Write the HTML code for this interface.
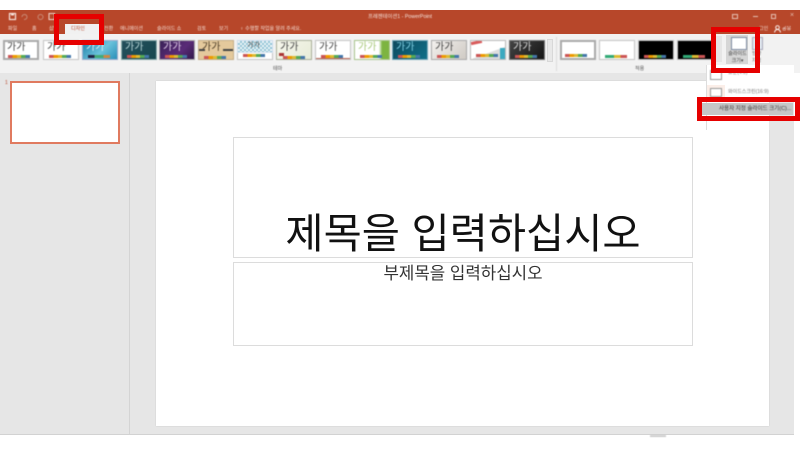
<!DOCTYPE html>
<html lang="ko"><head><meta charset="utf-8"><title>프레젠테이션1 - PowerPoint</title>
<style>
html,body{margin:0;padding:0;width:800px;height:450px;overflow:hidden;background:#fff}
body{position:relative;font-family:"Liberation Sans","Noto Sans CJK KR",sans-serif}
div,span{position:absolute;box-sizing:border-box;white-space:nowrap}
.s{filter:blur(.45px)}
.t{color:#f3d9cf;font-size:5px;line-height:8px;top:25px}
.th{top:40px;width:36px;height:20px;border:1px solid #c4c4c4;overflow:hidden;filter:blur(.5px)}
.th b{position:absolute;left:3px;top:0;font-weight:400;font-size:10px;line-height:13px;color:#444}
.th i{position:absolute;left:5px;top:14px;width:22px;height:2.500px;background:linear-gradient(90deg,#c55 0 20%,#e90 20% 40%,#db3 40% 60%,#5a5 60% 80%,#47a 80%)}
.l{color:#555;font-size:5px;line-height:7px}
.r{position:absolute;border:5px solid #e60000}
</style></head><body>
<!-- title bar -->
<div style="left:0;top:10px;width:800px;height:24px;background:#b7472a"></div>
<svg class="s" style="position:absolute;left:8px;top:12px" width="50" height="9" viewBox="0 0 50 9"><rect x="1.500" y="1.500" width="6" height="6" fill="none" stroke="#f6e3dc" stroke-width="1.200"/><rect x="3" y="1.500" width="3" height="2" fill="#f6e3dc"/><path d="M14 5a2.500 2.500 0 1 1 2 2.400" fill="none" stroke="#c98a75"/><path d="M30 5a2.500 2.500 0 1 0 5 0a2.500 2.500 0 1 0-5 0" fill="none" stroke="#c98a75"/><rect x="41" y="1.500" width="5.500" height="6" fill="none" stroke="#f0d5ca"/></svg>
<div class="s" style="left:368px;top:13px;font-size:5.300px;line-height:8px;color:#f6e3dc">프레젠테이션1 - PowerPoint</div>
<div class="s" style="left:732px;top:14px;width:6px;height:5px;border:1px solid #e6c0b2"></div>
<div class="s" style="left:753px;top:16px;width:5px;height:1px;background:#e6c0b2"></div>
<div class="s" style="left:771px;top:14px;width:5px;height:5px;border:1px solid #e6c0b2"></div>
<div class="s" style="left:790px;top:12px;color:#e6c0b2;font-size:7px;line-height:8px">×</div>
<!-- tabs -->
<div class="s t" style="left:8px">파일</div>
<div class="s t" style="left:32px">홈</div>
<div class="s t" style="left:49px">삽입</div>
<div style="left:65px;top:24px;width:35px;height:10px;background:#f1f1f1"></div>
<div class="s t" style="left:71px;color:#b7472a">디자인</div>
<div class="s t" style="left:104px">전환</div>
<div class="s t" style="left:120px">애니메이션</div>
<div class="s t" style="left:157px">슬라이드 쇼</div>
<div class="s t" style="left:197px">검토</div>
<div class="s t" style="left:219px">보기</div>
<div class="s t" style="left:240px">♀ 수행할 작업을 알려 주세요.</div>
<div class="s t" style="left:759px">그인</div>
<svg class="s" style="position:absolute;left:774px;top:25px" width="7" height="8" viewBox="0 0 7 8"><circle cx="3.500" cy="2.500" r="1.800" fill="none" stroke="#fff" stroke-width=".9"/><path d="M.5 7.500c.4-2.200 1.500-3 3-3s2.600.8 3 3" fill="none" stroke="#fff" stroke-width=".9"/></svg>
<div class="s t" style="left:782px;color:#fff">공유</div>
<!-- ribbon -->
<div style="left:0;top:34px;width:800px;height:39px;background:#f2f2f2"></div>
<div style="left:0;top:73px;width:794px;height:362px;background:#e6e6e6"></div>
<div style="left:0;top:434px;width:794px;height:1px;background:#d2d2d2"></div>
<div class="th" style="left:3px;background:#fff;border:2px solid #aaa"><b style="left:2px;top:-1px">가가</b><i style="top:13px;left:3px"></i></div>
<div class="th" style="left:43px;background:#fff"><b>가가</b><i></i></div>
<div class="th" style="left:82px;background:linear-gradient(135deg,#1f7fa8,#6cc3dc 55%,#2a8fb8);border-color:#9ac"><b style="color:#d5eef6">가가</b><i style="background:linear-gradient(90deg,#224 0 30%,#4a7 30% 70%,#c84 70%)"></i></div>
<div class="th" style="left:121px;background:linear-gradient(135deg,#254f5c,#16484f);border-color:#8aa"><b style="color:#b9d7d8">가가</b><i></i></div>
<div class="th" style="left:159px;background:linear-gradient(135deg,#3a2257,#5a2b78 60%,#32184a);border-color:#aaa"><b style="color:#e0cde9">가가</b><i></i></div>
<div class="th" style="left:198px;background:#e4c99c;border-color:#c6ae88"><b style="color:#4a3b25">가가</b><i style="top:15px"></i><span style="left:0;top:8px;width:6px;height:2px;background:#444"></span><span style="right:0;top:8px;width:10px;height:2px;background:#444"></span></div>
<div class="th" style="left:237px;background:repeating-conic-gradient(#8fc4d6 0 25%,#f1f6f8 0 50%) 0 0/4px 4px;height:13px;border-color:#cde"><b style="font-size:7px;top:-2px;left:9px">가가</b></div>
<div class="th" style="left:237px;background:#fff;top:53px;height:7px;border-top:0"><i style="top:1px"></i></div>
<div class="th" style="left:276px;background:linear-gradient(135deg,#f6f6ec,#e7ecd8);border-color:#aab09a"><b>가가</b><i style="left:6px;top:15px"></i><span style="left:2px;top:12px;width:5px;height:3px;background:#a33"></span></div>
<div class="th" style="left:315px;background:#fff"><b>가가</b><i></i><span style="left:0;bottom:0;width:36px;height:1px;background:#b65"></span></div>
<div class="th" style="left:354px;background:linear-gradient(90deg,#fff 70%,#7db441 80%);border-color:#a8c48c"><b style="color:#a9c97a">가가</b><i></i></div>
<div class="th" style="left:392px;background:linear-gradient(135deg,#0d4a5e,#0f6f88);border-color:#7ab"><b style="color:#7fd0e4">가가</b><i></i></div>
<div class="th" style="left:431px;background:linear-gradient(135deg,#f3f1ee,#cfcac4);border-color:#aaa"><b>가가</b><i></i></div>
<div class="th" style="left:470px;background:linear-gradient(160deg,#fff 60%,#ddd 60%);border-color:#bbb"><i style="top:13px"></i><span style="left:0;top:0;width:11px;height:3px;background:#d95b5b;transform:rotate(-12deg)"></span><span style="right:0;top:7px;width:5px;height:12px;background:#3ba9c0"></span></div>
<div class="th" style="left:509px;background:linear-gradient(135deg,#444,#141414);border-color:#777"><b style="color:#ddd">가가</b><i></i></div>
<div style="left:547px;top:39px;width:6px;height:23px;background:#e8e8e8;border:1px solid #d8d8d8"></div>
<div class="s" style="left:556px;top:37px;width:1px;height:34px;background:#dcdcdc"></div>
<div class="s l" style="left:273px;top:66px">테마</div>
<div class="th" style="left:560px;background:#fff;border:2px solid #aaa"><i style="top:12px;left:3px"></i></div>
<div class="th" style="left:599px;background:#fff"><i style="background:linear-gradient(90deg,#3a7 0 40%,#db3 40% 70%,#c55 70%)"></i></div>
<div class="th" style="left:638px;background:#000"><i></i></div>
<div class="th" style="left:677px;background:#000"><i style="background:linear-gradient(90deg,#3a7 0 40%,#db3 40% 70%,#c55 70%)"></i></div>
<div class="s l" style="left:635px;top:66px">적용</div>
<div style="left:716px;top:36px;width:6px;height:26px;background:#e6e6e6"></div>
<div style="left:726px;top:35px;width:22px;height:29px;background:#d6d6d6"></div>
<div class="s" style="left:731px;top:37px;width:16px;height:13px;background:#fff;border:1.500px solid #7d8aa0"></div>
<div class="s" style="left:727px;top:51px;font-size:5px;line-height:6.500px;color:#444;text-align:center;width:21px;white-space:normal">슬라이드<br>크기▾</div>
<div class="s" style="left:752px;top:37px;width:11px;height:13px;background:#dfe6ee;border:1px solid #aab"></div>
<div class="s" style="left:752px;top:51px;font-size:5px;line-height:6.500px;color:#777;width:12px;white-space:normal">방향<br>지정</div>
<!-- slides panel -->
<div style="left:129px;top:73px;width:1px;height:361px;background:#d4d4d4"></div>
<div style="left:10px;top:81px;width:110px;height:63px;background:#fff;border:2px solid #e07a5f"></div>
<div class="s" style="left:5px;top:80px;font-size:5px;line-height:7px;color:#b7472a">1</div>
<!-- slide -->
<div style="left:156px;top:81px;width:613px;height:345px;background:#fff;box-shadow:0 0 1px #bbb"></div>
<div style="left:233px;top:137px;width:460px;height:121px;border:1px solid #dcdcdc"></div>
<div style="left:233px;top:262px;width:460px;height:84px;border:1px solid #dcdcdc"></div>
<div style="left:233px;top:205px;width:460px;text-align:center;font-size:41.500px;line-height:58px;color:#111;filter:blur(.3px)">제목을 입력하십시오</div>
<div style="left:233px;top:262px;width:460px;text-align:center;font-size:16.800px;line-height:24px;color:#333;filter:blur(.3px)">부제목을 입력하십시오</div>
<!-- dropdown -->
<div style="left:706px;top:65px;width:63px;height:65px;background:#fff;border-left:1px solid #ddd"></div>
<div style="left:769px;top:65px;width:25px;height:33px;background:#fff"></div>
<div style="left:769px;top:121px;width:25px;height:9px;background:#e6e6e6"></div>
<div class="s" style="left:710px;top:70px;width:12px;height:10px;background:#fff;border:1px solid #999"></div>
<div class="s" style="left:728px;top:70px;font-size:5px;line-height:7px;color:#777">표준(4:3)</div>
<div style="left:707px;top:85px;width:18px;height:13px;background:#fbeee8"></div>
<div class="s" style="left:710px;top:88px;width:12px;height:9px;background:#fff;border:1px solid #999"></div>
<div class="s" style="left:728px;top:89px;font-size:5px;line-height:7px;color:#777">와이드스크린(16:9)</div>
<div style="left:702px;top:103px;width:91px;height:12px;background:#c6c6c6"></div>
<div class="s" style="left:719px;top:105px;font-size:5.500px;line-height:8px;color:#333">사용자 지정 슬라이드 크기(C)...</div>
<!-- red highlights -->
<div class="r" style="left:54px;top:14px;width:50px;height:31px"></div>
<div class="r" style="left:711px;top:27px;width:49px;height:46px"></div>
<div class="r" style="left:697px;top:97px;width:103px;height:24px"></div>
<!-- bottom bits -->
<div class="s" style="left:650px;top:435px;width:16px;height:2px;background:#ccc"></div>
</body></html>
